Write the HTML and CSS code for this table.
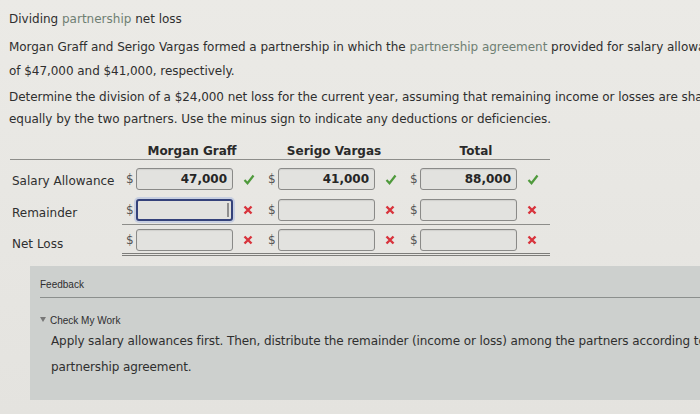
FILE: index.html
```html
<!DOCTYPE html>
<html>
<head>
<meta charset="utf-8">
<link rel="stylesheet" href="styles.css">
</head>
<body>
<div class="page">
  <h1 class="title">Dividing <span class="link">partnership</span> net loss</h1>
  <p class="para p1">Morgan Graff and Serigo Vargas formed a partnership in which the <span class="link">partnership agreement</span> provided for salary allowances<br>of $47,000 and $41,000, respectively.</p>
  <p class="para p2">Determine the division of a $24,000 net loss for the current year, assuming that remaining income or losses are shared<br>equally by the two partners. Use the minus sign to indicate any deductions or deficiencies.</p>

  <div class="table">
    <div class="row head">
      <div class="label"></div>
      <div class="cells">
        <div class="group hcell">Morgan Graff</div>
        <div class="group hcell">Serigo Vargas</div>
        <div class="group hcell">Total</div>
      </div>
    </div>
    <div class="row r1">
      <div class="label">Salary Allowance</div>
      <div class="cells">
        <div class="group"><span class="cur">$</span><span class="box">47,000</span><span class="mark"><svg viewBox="0 0 12 11" width="12" height="11"><path d="M1.5 6 L4.5 9.2 L10.5 1.5" fill="none" stroke="#4f9a3c" stroke-width="2.2"/></svg></span></div>
        <div class="group"><span class="cur">$</span><span class="box">41,000</span><span class="mark"><svg viewBox="0 0 12 11" width="12" height="11"><path d="M1.5 6 L4.5 9.2 L10.5 1.5" fill="none" stroke="#4f9a3c" stroke-width="2.2"/></svg></span></div>
        <div class="group"><span class="cur">$</span><span class="box">88,000</span><span class="mark"><svg viewBox="0 0 12 11" width="12" height="11"><path d="M1.5 6 L4.5 9.2 L10.5 1.5" fill="none" stroke="#4f9a3c" stroke-width="2.2"/></svg></span></div>
      </div>
    </div>
    <div class="row r2">
      <div class="label">Remainder</div>
      <div class="cells ruled">
        <div class="group"><span class="cur">$</span><span class="box focus"><span class="caret"></span></span><span class="mark"><svg viewBox="0 0 10 10" width="10" height="10"><path d="M1.5 1.5 L8.5 8.5 M8.5 1.5 L1.5 8.5" stroke="#d8333c" stroke-width="2.4"/></svg></span></div>
        <div class="group"><span class="cur">$</span><span class="box"></span><span class="mark"><svg viewBox="0 0 10 10" width="10" height="10"><path d="M1.5 1.5 L8.5 8.5 M8.5 1.5 L1.5 8.5" stroke="#d8333c" stroke-width="2.4"/></svg></span></div>
        <div class="group"><span class="cur">$</span><span class="box"></span><span class="mark"><svg viewBox="0 0 10 10" width="10" height="10"><path d="M1.5 1.5 L8.5 8.5 M8.5 1.5 L1.5 8.5" stroke="#d8333c" stroke-width="2.4"/></svg></span></div>
      </div>
    </div>
    <div class="row r3">
      <div class="label">Net Loss</div>
      <div class="cells double">
        <div class="group"><span class="cur">$</span><span class="box"></span><span class="mark"><svg viewBox="0 0 10 10" width="10" height="10"><path d="M1.5 1.5 L8.5 8.5 M8.5 1.5 L1.5 8.5" stroke="#d8333c" stroke-width="2.4"/></svg></span></div>
        <div class="group"><span class="cur">$</span><span class="box"></span><span class="mark"><svg viewBox="0 0 10 10" width="10" height="10"><path d="M1.5 1.5 L8.5 8.5 M8.5 1.5 L1.5 8.5" stroke="#d8333c" stroke-width="2.4"/></svg></span></div>
        <div class="group"><span class="cur">$</span><span class="box"></span><span class="mark"><svg viewBox="0 0 10 10" width="10" height="10"><path d="M1.5 1.5 L8.5 8.5 M8.5 1.5 L1.5 8.5" stroke="#d8333c" stroke-width="2.4"/></svg></span></div>
      </div>
    </div>
  </div>

  <div class="feedback">
    <div class="fb-head">Feedback</div>
    <div class="fb-toggle"><span class="tri"></span>Check My Work</div>
    <p class="fb-text">Apply salary allowances first. Then, distribute the remainder (income or loss) among the partners according to the<br>partnership agreement.</p>
  </div>
</div>
</body>
</html>
```

FILE: styles.css
```css
html, body {
  margin: 0;
  padding: 0;
}
body {
  width: 700px;
  height: 414px;
  overflow: hidden;
  background: linear-gradient(180deg, #ebeae6 0%, #e7e6e2 60%, #e4e3df 100%);
  font-family: "DejaVu Sans", Verdana, sans-serif;
  font-size: 12px;
  color: #2f2f2f;
}
.page {
  width: 820px;
  padding: 9px 0 0 9px;
  white-space: nowrap;
}
.title {
  margin: 0;
  font-size: 12px;
  font-weight: normal;
  line-height: 20px;
}
.link {
  color: #6f7f73;
}
.para {
  margin: 0;
  letter-spacing: -0.05px;
}
.p1 {
  margin-top: 6px;
  line-height: 24px;
}
.p2 {
  margin-top: 3px;
  line-height: 22px;
}
.table {
  width: 540px;
  margin-top: 13px;
  margin-left: 1px;
}
.row {
  display: flex;
}
.label {
  width: 110px;
  padding-left: 2px;
  padding-top: 7px;
  display: flex;
  align-items: center;
}
.head .label {
  padding-top: 0;
}
.cells {
  display: flex;
  gap: 10px;
  padding-left: 4px;
  width: 424px;
}
.group {
  width: 132px;
  display: flex;
  align-items: center;
}
.head {
  border-bottom: 1px solid #8d8d8a;
  line-height: 16px;
}
.hcell {
  justify-content: center;
  font-weight: bold;
  color: #2a2a2a;
}
.r1 .cells {
  padding-top: 8px;
  padding-bottom: 4px;
}
.r2 .cells {
  padding-top: 5px;
  padding-bottom: 3px;
}
.r3 .cells {
  padding-top: 4px;
  padding-bottom: 2px;
}
.ruled {
  border-bottom: 1px solid #8d8d8a;
}
.double {
  border-bottom: 3px double #7d7d7a;
}
.cur {
  width: 10px;
  color: #555;
  font-size: 12px;
}
.box {
  box-sizing: border-box;
  width: 97px;
  height: 22px;
  border: 1px solid #8a8a88;
  border-radius: 3px;
  background: #e2e2df;
  box-shadow: inset 0 1px 1px rgba(0,0,0,0.08);
  font-weight: bold;
  color: #262626;
  text-align: right;
  padding-right: 5px;
  line-height: 20px;
  display: flex;
  align-items: center;
  justify-content: flex-end;
}
.box.focus {
  border: 2px solid #34427a;
  box-shadow: 0 0 0 2px rgba(160, 178, 222, 0.45);
  padding-right: 2px;
}
.caret {
  width: 2px;
  height: 14px;
  background: #8e8e8e;
}
.mark {
  width: 25px;
  box-sizing: border-box;
  padding-left: 10px;
  display: flex;
  align-items: center;
}
.feedback {
  margin-top: 10px;
  margin-left: 21px;
  height: 134px;
  box-sizing: border-box;
  background: #cdd0ce;
  padding: 12px 0 0 10px;
  font-family: "Liberation Sans", Arial, sans-serif;
  font-size: 10px;
  color: #2e2e2e;
}
.fb-head {
  line-height: 14px;
  padding-bottom: 5px;
  border-bottom: 1px solid #8b8f8d;
}
.fb-toggle {
  margin-top: 16px;
  line-height: 14px;
  display: flex;
  align-items: center;
}
.tri {
  width: 0;
  height: 0;
  border-left: 3px solid transparent;
  border-right: 3px solid transparent;
  border-top: 5px solid #777;
  margin-right: 4px;
  margin-top: -3px;
}
.fb-text {
  margin: 0 0 0 11px;
  font-family: "DejaVu Sans", Verdana, sans-serif;
  font-size: 12px;
  line-height: 26px;
  letter-spacing: -0.1px;
  color: #2f2f2f;
}
```
